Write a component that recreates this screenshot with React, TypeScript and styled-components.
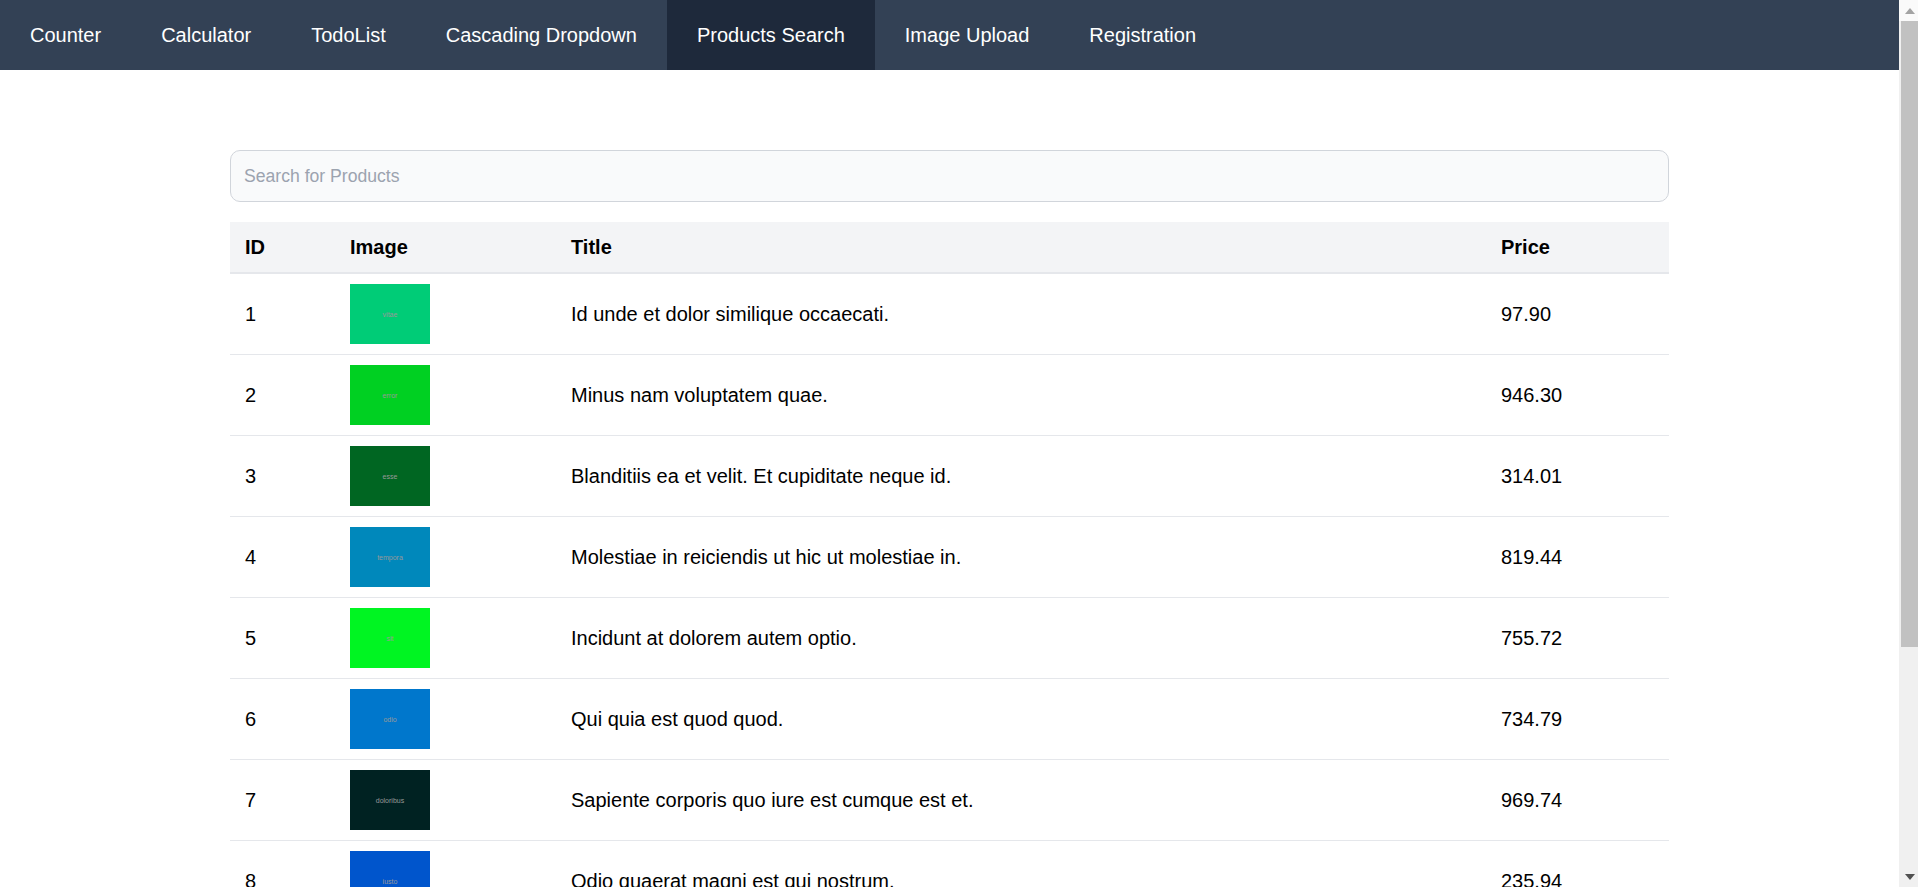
import styled, { createGlobalStyle } from "styled-components";

const GlobalStyle = createGlobalStyle`
  body {
    margin: 0;
    background: #fff;
    color: #000;
    font-family: "Liberation Sans", Arial, sans-serif;
  }
`;

const Shell = styled.div`
  display: flex;
  height: 100vh;
  overflow: hidden;
`;

const Page = styled.div`
  flex: 1;
  min-width: 0;
  overflow: hidden;
`;

const Nav = styled.nav`
  display: flex;
  height: 70px;
  background: #334155;
`;

const NavItem = styled.a<{ $active?: boolean }>`
  display: flex;
  align-items: center;
  padding: 0 30px;
  font-size: 20px;
  color: #fff;
  background: ${(p) => (p.$active ? "#1e293b" : "transparent")};
`;

const Container = styled.main`
  width: 1439px;
  margin: 0 auto;
  padding-top: 80px;
`;

const SearchInput = styled.input`
  display: block;
  box-sizing: border-box;
  width: 100%;
  height: 52px;
  margin-bottom: 20px;
  padding: 0 13px;
  border: 1px solid #d1d5db;
  border-radius: 10px;
  background: #f9fafb;
  font-family: inherit;
  font-size: 17.6px;
  outline: none;

  &::placeholder {
    color: #9ca3af;
    opacity: 1;
  }
`;

const Table = styled.table`
  width: 100%;
  table-layout: fixed;
  border-collapse: separate;
  border-spacing: 0;
  font-size: 20px;
`;

const HeadCell = styled.th<{ $width: number }>`
  box-sizing: border-box;
  width: ${(p) => p.$width}px;
  height: 52px;
  padding: 0 15px;
  background: #f3f4f6;
  border-bottom: 2px solid #e5e7eb;
  text-align: left;
  font-weight: 700;
`;

const Cell = styled.td`
  padding: 10px 15px;
  border-bottom: 1px solid #e5e7eb;
`;

const Thumb = styled.div<{ $color: string }>`
  display: flex;
  align-items: center;
  justify-content: center;
  width: 80px;
  height: 60px;
  background: ${(p) => p.$color};
  color: #999;
  font-size: 7px;
`;

const ScrollBar = styled.div`
  display: flex;
  flex-direction: column;
  flex: none;
  width: 19px;
  background: #f0f0f0;
`;

const ScrollButton = styled.div<{ $bg: string }>`
  display: flex;
  align-items: center;
  justify-content: center;
  flex: none;
  height: 21px;
  padding-left: 2px;
  box-sizing: border-box;
  background: ${(p) => p.$bg};
`;

const ScrollTrack = styled.div`
  flex: 1;
`;

const ScrollThumb = styled.div`
  height: 626px;
  margin-left: 2px;
  background: #c1c1c1;
`;

const links = [
  "Counter",
  "Calculator",
  "TodoList",
  "Cascading Dropdown",
  "Products Search",
  "Image Upload",
  "Registration",
];

const products = [
  { id: 1, word: "vitae", color: "#00cc77", title: "Id unde et dolor similique occaecati.", price: "97.90" },
  { id: 2, word: "error", color: "#00d022", title: "Minus nam voluptatem quae.", price: "946.30" },
  { id: 3, word: "esse", color: "#006622", title: "Blanditiis ea et velit. Et cupiditate neque id.", price: "314.01" },
  { id: 4, word: "tempora", color: "#0088bb", title: "Molestiae in reiciendis ut hic ut molestiae in.", price: "819.44" },
  { id: 5, word: "sit", color: "#00f522", title: "Incidunt at dolorem autem optio.", price: "755.72" },
  { id: 6, word: "odio", color: "#0077cc", title: "Qui quia est quod quod.", price: "734.79" },
  { id: 7, word: "doloribus", color: "#002222", title: "Sapiente corporis quo iure est cumque est et.", price: "969.74" },
  { id: 8, word: "iusto", color: "#0055cc", title: "Odio quaerat magni est qui nostrum.", price: "235.94" },
];

export default function App() {
  return (
    <Shell>
      <GlobalStyle />
      <Page>
        <Nav>
          {links.map((link) => (
            <NavItem key={link} $active={link === "Products Search"}>
              {link}
            </NavItem>
          ))}
        </Nav>
        <Container>
          <SearchInput placeholder="Search for Products" />
          <Table>
            <thead>
              <tr>
                <HeadCell $width={105}>ID</HeadCell>
                <HeadCell $width={221}>Image</HeadCell>
                <HeadCell $width={930}>Title</HeadCell>
                <HeadCell $width={183}>Price</HeadCell>
              </tr>
            </thead>
            <tbody>
              {products.map((p) => (
                <tr key={p.id}>
                  <Cell>{p.id}</Cell>
                  <Cell>
                    <Thumb $color={p.color}>{p.word}</Thumb>
                  </Cell>
                  <Cell>{p.title}</Cell>
                  <Cell>{p.price}</Cell>
                </tr>
              ))}
            </tbody>
          </Table>
        </Container>
      </Page>
      <ScrollBar>
        <ScrollButton $bg="#fafafa">
          <svg width="10" height="6" viewBox="0 0 10 6">
            <path d="M0 6h10L5 0z" fill="#a3a3a3" />
          </svg>
        </ScrollButton>
        <ScrollThumb />
        <ScrollTrack />
        <ScrollButton $bg="#f0f0f0">
          <svg width="10" height="6" viewBox="0 0 10 6">
            <path d="M0 0h10L5 6z" fill="#505050" />
          </svg>
        </ScrollButton>
      </ScrollBar>
    </Shell>
  );
}
